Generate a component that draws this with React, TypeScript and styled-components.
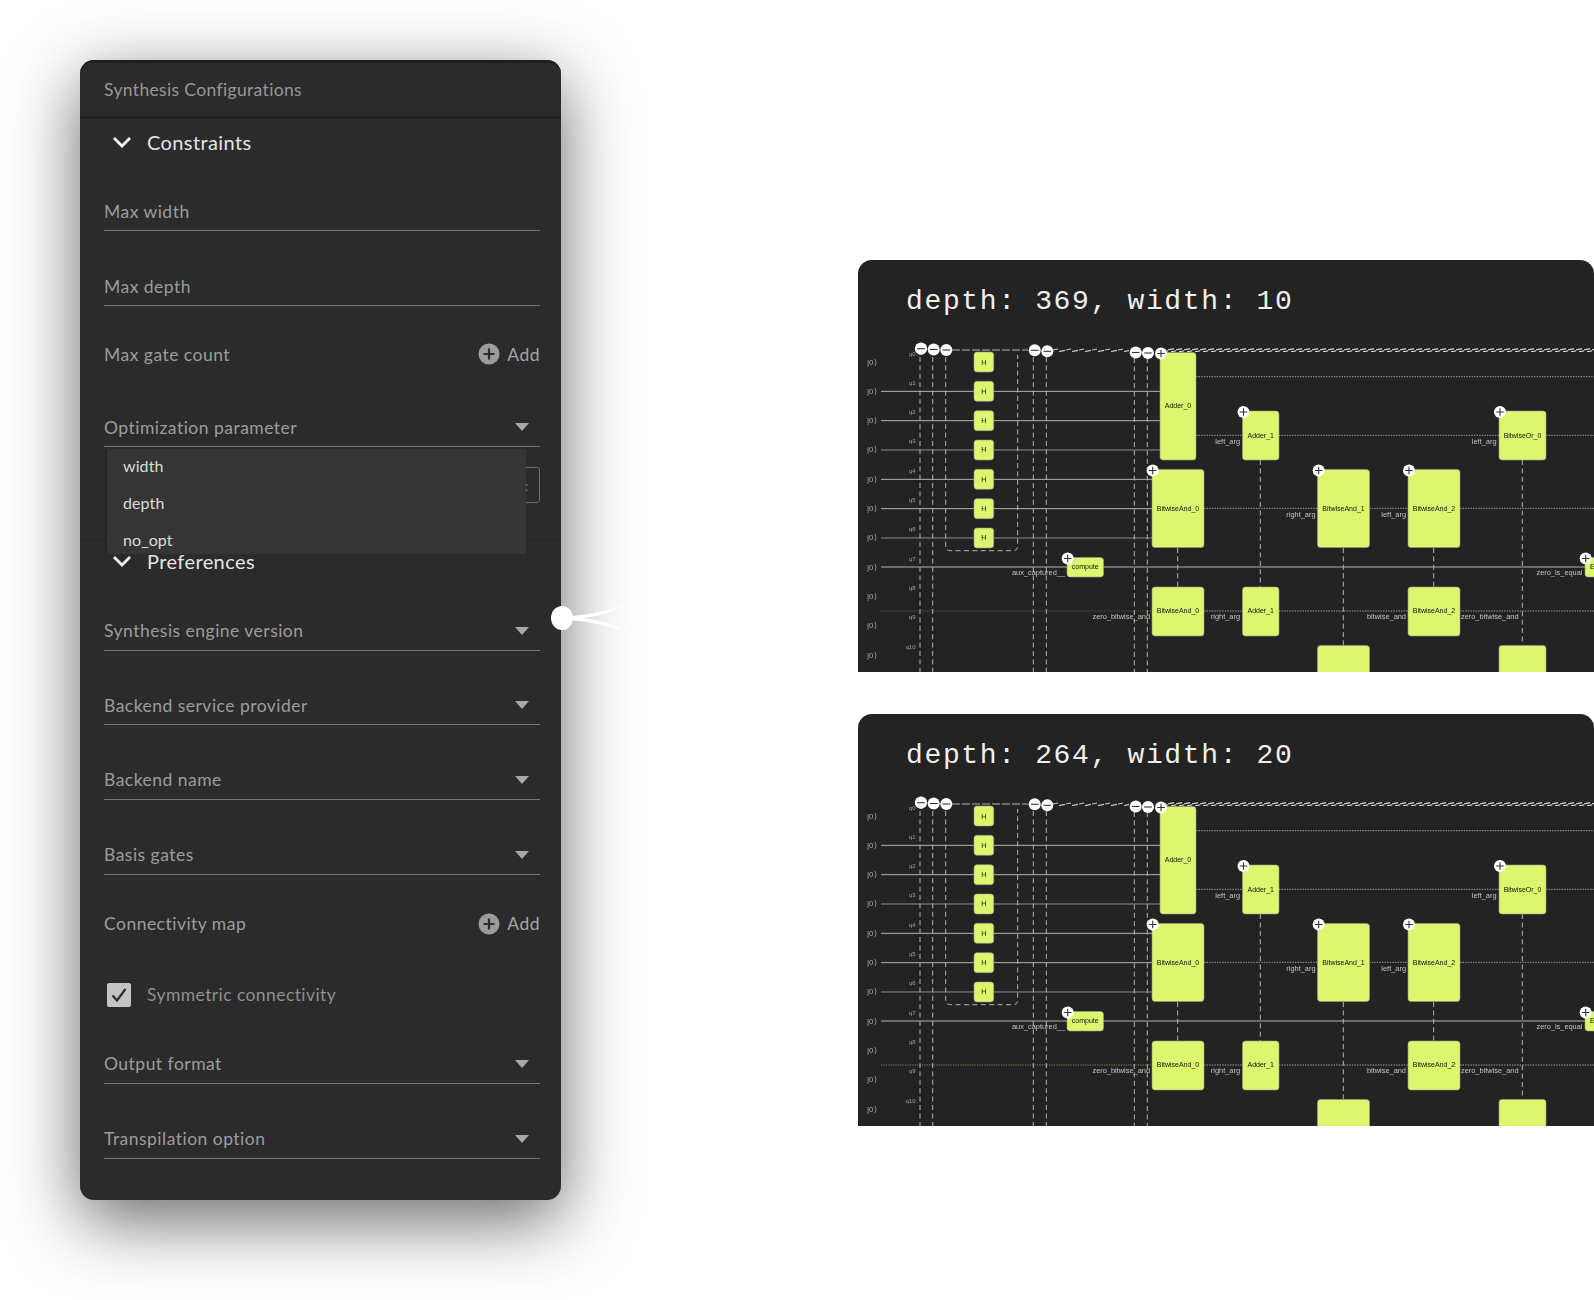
import React from 'react';
import styled, { createGlobalStyle } from 'styled-components';

const GlobalStyle = createGlobalStyle`
  html, body {
    margin: 0;
    padding: 0;
    background: #fff;
  }
  * {
    box-sizing: border-box;
  }
`;

/* page */
const Page = styled.div`
  position: relative;
  display: flex;
  width: 1594px;
  height: 1300px;
  overflow: hidden;
  background: #fff;
  font-family: 'Lato', 'Open Sans', sans-serif;
`;

/* config panel */
const ConfigPanel = styled.section`
  flex: none;
  position: relative;
  width: 481px;
  height: 1140px;
  margin: 60px 0 0 80px;
  background: #2b2b2b;
  border-radius: 14px;
  box-shadow: 0 20px 70px rgba(0, 0, 0, 0.6);
`;

const PanelHeader = styled.header`
  display: flex;
  align-items: center;
  height: 59px;
  padding-left: 24px;
  border-top: 3px solid #1f1f1f;
  border-bottom: 3px solid #1f1f1f;
  border-radius: 14px 14px 0 0;
  font-size: 17.5px;
  letter-spacing: 0.35px;
  color: #979797;
`;

const SectionHead = styled.div<{ $height: number }>`
  display: flex;
  align-items: center;
  gap: 15px;
  height: ${(p) => p.$height}px;
  padding: 0 0 2px 32px;
  font-size: 20px;
  letter-spacing: 0.4px;
  color: #e4e4e4;
`;

const Fields = styled.div`
  padding: 0 21px 0 24px;
`;

const Field = styled.div<{ $top: number }>`
  display: flex;
  align-items: center;
  justify-content: space-between;
  height: 38px;
  margin-top: ${(p) => p.$top}px;
  padding: 0 11px 1px 0;
  border-bottom: 1.5px solid #747474;
  font-size: 17.5px;
  letter-spacing: 0.48px;
  color: #9c9c9c;
`;

const AddRow = styled(Field)`
  padding: 0;
  border-bottom: 0;
`;

const AddButton = styled.span`
  display: flex;
  align-items: center;
  gap: 7px;
  color: #a5a5a5;
`;

const Caret = styled.span`
  width: 0;
  height: 0;
  border-left: 7px solid transparent;
  border-right: 7px solid transparent;
  border-top: 8px solid #a8a8a8;
`;

const GhostInput = styled.div`
  display: flex;
  align-items: center;
  justify-content: flex-end;
  height: 36px;
  margin: 20px 0 0 6px;
  padding-right: 11px;
  border: 1px solid #6e6e6e;
  border-radius: 3px;
  font-size: 14px;
  color: #888;
`;

const SectionRule = styled.div`
  height: 1px;
  margin-top: 36px;
  background: #252525;
`;

const CheckRow = styled.label<{ $top: number }>`
  display: flex;
  align-items: center;
  gap: 16px;
  height: 24px;
  margin-top: ${(p) => p.$top}px;
  padding-left: 3px;
  font-size: 17.5px;
  letter-spacing: 0.42px;
  color: #8f8f8f;
`;

const CheckBox = styled.span`
  display: flex;
  align-items: center;
  justify-content: center;
  width: 24px;
  height: 24px;
  border-radius: 2px;
  background: #c4c4c4;
`;

const Menu = styled.ul`
  position: absolute;
  left: 25px;
  top: 389px;
  width: 421px;
  height: 105px;
  margin: 0;
  padding: 0;
  overflow: hidden;
  list-style: none;
  background: #353535;
  border-left: 2px solid #232323;
`;

const MenuItem = styled.li`
  display: flex;
  align-items: center;
  height: 37px;
  padding: 0 0 4px 16px;
  font-size: 16px;
  letter-spacing: 0.1px;
  color: #dcdcdc;
`;

const Connector = styled.svg`
  position: absolute;
  left: 550px;
  top: 594px;
`;

/* result panels */
const Results = styled.div`
  flex: none;
  display: flex;
  flex-direction: column;
  gap: 42px;
  width: 736px;
  margin: 260px 0 0 297px;
`;

const ResultCard = styled.article`
  height: 412px;
  overflow: hidden;
  background: #232323;
  border-radius: 14px 14px 0 0;
`;

const ResultTitle = styled.h2`
  height: 70px;
  margin: 0;
  padding: 24px 0 0 48px;
  font-family: 'Liberation Mono', 'Courier New', monospace;
  font-size: 28px;
  font-weight: 400;
  line-height: 36px;
  letter-spacing: 1.65px;
  color: #efefef;
`;

const CircuitSvg = styled.svg`
  display: block;
  width: 736px;
  height: 342px;
  font-family: 'Liberation Sans', Arial, sans-serif;
  filter: blur(0.3px);
`;

const Chevron = () => (
  <svg width="20" height="12" viewBox="0 0 20 12" fill="none">
    <path d="M2 2 L10 10 L18 2" stroke="#f2f2f2" strokeWidth="2.8" />
  </svg>
);

const AddIcon = () => (
  <svg width="22" height="22" viewBox="0 0 22 22">
    <circle cx="11" cy="11" r="10.5" fill="#9b9b9b" />
    <path d="M11 5.5 V16.5 M5.5 11 H16.5" stroke="#2b2b2b" strokeWidth="2.2" />
  </svg>
);

const CheckMark = () => (
  <svg width="18" height="16" viewBox="0 0 18 16" fill="none">
    <path d="M2.5 8.5 L7 13.5 L15.5 2" stroke="#2b2b2b" strokeWidth="2.2" />
  </svg>
);

/* circuit data, in page coordinates of the first card */
const rowY = (i: number) => 362 + i * 29.33;
const GATE = '#dcf76e';
const LINE = '#b2b2b2';

const gates = [
  { x: 1160, y: 352.5, w: 36, h: 107.5, label: 'Adder_0', ly: 406 },
  { x: 1152, y: 469.5, w: 52, h: 78, label: 'BitwiseAnd_0', ly: 508.3 },
  { x: 1152, y: 587, w: 52, h: 49, label: 'BitwiseAnd_0', ly: 611 },
  { x: 1067, y: 557.5, w: 36.5, h: 19.5, label: 'compute', ly: 567 },
  { x: 1242.5, y: 411, w: 36.5, h: 49, label: 'Adder_1', ly: 435.3 },
  { x: 1242.5, y: 587, w: 36.5, h: 49, label: 'Adder_1', ly: 611 },
  { x: 1317.5, y: 469.5, w: 52, h: 78, label: 'BitwiseAnd_1', ly: 508.3 },
  { x: 1408, y: 469.5, w: 52, h: 78, label: 'BitwiseAnd_2', ly: 508.3 },
  { x: 1408, y: 587, w: 52, h: 49, label: 'BitwiseAnd_2', ly: 611 },
  { x: 1499, y: 411, w: 47, h: 49, label: 'BitwiseOr_0', ly: 435.3 },
  { x: 1317.5, y: 645.5, w: 52, h: 60, label: '', ly: 0 },
  { x: 1499, y: 645.5, w: 47, h: 60, label: '', ly: 0 },
  { x: 1585, y: 557.5, w: 30, h: 19.5, label: 'E', ly: 567 },
];

const wireLabels = [
  { x: 1065, y: 573, text: 'aux_captured__' },
  { x: 1150, y: 617, text: 'zero_bitwise_and' },
  { x: 1240, y: 441.5, text: 'left_arg' },
  { x: 1240, y: 617, text: 'right_arg' },
  { x: 1315.5, y: 514.7, text: 'right_arg' },
  { x: 1406, y: 514.7, text: 'left_arg' },
  { x: 1406, y: 617, text: 'bitwise_and' },
  { x: 1518.5, y: 617, text: 'zero_bitwise_and' },
  { x: 1496.5, y: 441.5, text: 'left_arg' },
  { x: 1582.5, y: 573, text: 'zero_is_equal' },
];

const dotted: [number, number, number][] = [
  [376.7, 1196, 1594],
  [435.3, 1196, 1242],
  [435.3, 1279, 1499],
  [435.3, 1546, 1594],
  [508.3, 1204, 1317],
  [508.3, 1369, 1408],
  [508.3, 1460, 1594],
  [611, 1204, 1242],
  [611, 1279, 1408],
  [611, 1460, 1594],
];

const scopeLines: [number, number, number][] = [
  [920, 357, 672],
  [932.7, 357, 672],
  [1033.3, 357, 672],
  [1046.3, 357, 672],
  [1134.3, 358, 672],
  [1147.3, 358, 672],
  [1177.7, 548, 587],
  [1260.3, 460, 587],
  [1343.3, 548, 645],
  [1433.7, 548, 587],
  [1522.3, 460, 645],
];

const minus = [
  [921, 348.7, 6.2],
  [933.7, 349.5, 6],
  [946.3, 350, 6],
  [1034.7, 350.3, 6],
  [1047.3, 351.3, 6],
  [1135.7, 352.5, 6],
  [1148, 353, 6],
];

const plus = [
  [1161, 353.5],
  [1152.7, 470.5],
  [1067.7, 558.5],
  [1243.5, 412],
  [1318.7, 470.5],
  [1409, 470.5],
  [1500, 412],
  [1585.7, 558.5],
];

type CircuitProps = { id: string; green: number };

const Circuit = ({ id, green }: CircuitProps) => (
  <CircuitSvg viewBox="858 330 736 342">
    <defs>
      <pattern id={`${id}-a`} width="13" height="4" patternUnits="userSpaceOnUse" y="348">
        <path d="M0 2 L5 1 M6 3.6 L12 2.4" stroke="#c8c8c8" strokeWidth="1.2" />
      </pattern>
      <pattern id={`${id}-b`} width="8" height="4" patternUnits="userSpaceOnUse" y="348">
        <path d="M0 1.8 L6 0.6 M3 3.8 L8 2.8" stroke="#d4d4d4" strokeWidth="1.2" />
      </pattern>
    </defs>

    <path d="M952 350 H1028" stroke="#b4b4b4" strokeWidth="1.1" strokeDasharray="8 2" />
    <rect x="1053" y="348" width="76" height="4" fill={`url(#${id}-a)`} />
    <rect x="1166" y="348" width="428" height="4" fill={`url(#${id}-b)`} />

    {Array.from({ length: 11 }, (_, i) => (
      <text key={i} x="867" y={rowY(i) + 2.5} fontSize="8" fill="#a8a8a8">
        |0⟩
      </text>
    ))}
    {Array.from({ length: 11 }, (_, i) => (
      <text key={i} x="915.5" y={rowY(i) - 6.5} fontSize="6" fill="#a0a0a0" textAnchor="end">
        q{i}
      </text>
    ))}

    {[1, 2, 3, 4, 5, 6].map((i) => (
      <path
        key={i}
        d={`M881 ${rowY(i)} H1160`}
        stroke={i === 3 || i === 6 ? '#8c8c8c' : LINE}
        strokeWidth="1"
      />
    ))}
    <path d={`M881 567 H1594`} stroke={LINE} strokeWidth="1" />
    <path
      d="M881 611 H1152"
      stroke="#5fa03c"
      strokeWidth="1"
      strokeDasharray="1.2 1.2"
      opacity={green}
    />
    {dotted.map(([y, a, b], i) => (
      <path
        key={i}
        d={`M${a} ${y} H${b}`}
        stroke="#b4b4b4"
        strokeWidth="0.9"
        strokeDasharray="1.4 1.2"
      />
    ))}

    {scopeLines.map(([x, a, b], i) => (
      <path
        key={i}
        d={`M${x} ${a} V${b}`}
        stroke="#b4b4b4"
        strokeWidth="1"
        strokeDasharray="5 3.4"
      />
    ))}
    <path
      d="M945.7 357 V546 Q945.7 550.7 950.5 550.7 H1013 Q1017.7 550.7 1017.7 546 V355"
      fill="none"
      stroke="#b4b4b4"
      strokeWidth="1"
      strokeDasharray="5 3.4"
    />

    {[0, 1, 2, 3, 4, 5, 6].map((i) => (
      <g key={i}>
        <rect
          x="974"
          y={rowY(i) - 10}
          width="19.7"
          height="20"
          rx="3"
          fill={GATE}
          stroke="#9a9a9a"
          strokeWidth="0.6"
        />
        <text x="983.8" y={rowY(i) + 2.5} fontSize="7" fill="#111" textAnchor="middle">
          H
        </text>
      </g>
    ))}

    {gates.map((g, i) => (
      <g key={i}>
        <rect
          x={g.x}
          y={g.y}
          width={g.w}
          height={g.h}
          rx="3"
          fill={GATE}
          stroke="#9a9a9a"
          strokeWidth="0.6"
        />
        {g.label && (
          <text
            x={g.label === 'E' ? 1590 : g.x + g.w / 2}
            y={g.ly + 2.4}
            fontSize="7"
            fill="#111"
            textAnchor={g.label === 'E' ? 'start' : 'middle'}
          >
            {g.label}
          </text>
        )}
      </g>
    ))}

    {wireLabels.map((l, i) => (
      <text key={i} x={l.x} y={l.y + 2.4} fontSize="7.4" fill="#c4c4c4" textAnchor="end">
        {l.text}
      </text>
    ))}

    {minus.map(([x, y, r], i) => (
      <g key={i}>
        <circle cx={x} cy={y} r={r} fill="#fff" />
        <path d={`M${x - 3.8} ${y} H${x + 3.8}`} stroke="#333" strokeWidth="1.1" />
      </g>
    ))}
    {plus.map(([x, y], i) => (
      <g key={i}>
        <circle cx={x} cy={y} r="6" fill="#fff" />
        <path
          d={`M${x - 3.8} ${y} H${x + 3.8} M${x} ${y - 3.8} V${y + 3.8}`}
          stroke="#333"
          strokeWidth="1.1"
        />
      </g>
    ))}
  </CircuitSvg>
);

const SelectField = ({ label, top }: { label: string; top: number }) => (
  <Field $top={top}>
    {label}
    <Caret />
  </Field>
);

const AddField = ({ label, top }: { label: string; top: number }) => (
  <AddRow $top={top}>
    {label}
    <AddButton>
      <AddIcon />
      Add
    </AddButton>
  </AddRow>
);

export default function App() {
  return (
    <Page>
      <GlobalStyle />
      <ConfigPanel>
        <PanelHeader>Synthesis Configurations</PanelHeader>
        <SectionHead $height={48}>
          <Chevron />
          Constraints
        </SectionHead>
        <Fields>
          <Field $top={26}>Max width</Field>
          <Field $top={37}>Max depth</Field>
          <AddField label="Max gate count" top={29} />
          <SelectField label="Optimization parameter" top={36} />
          <GhostInput>:</GhostInput>
        </Fields>
        <SectionRule />
        <SectionHead $height={44}>
          <Chevron />
          Preferences
        </SectionHead>
        <Fields>
          <SelectField label="Synthesis engine version" top={28.5} />
          <SelectField label="Backend service provider" top={36.5} />
          <SelectField label="Backend name" top={36.5} />
          <SelectField label="Basis gates" top={37} />
          <AddField label="Connectivity map" top={30} />
          <CheckRow $top={40}>
            <CheckBox>
              <CheckMark />
            </CheckBox>
            Symmetric connectivity
          </CheckRow>
          <SelectField label="Output format" top={39} />
          <SelectField label="Transpilation option" top={37} />
        </Fields>
        <Menu>
          <MenuItem>width</MenuItem>
          <MenuItem>depth</MenuItem>
          <MenuItem>no_opt</MenuItem>
        </Menu>
      </ConfigPanel>

      <Connector width="90" height="48" viewBox="0 0 90 48">
        <ellipse cx="12" cy="24" rx="11" ry="12" fill="#fff" />
        <path d="M20 22 Q46 21 82 8 Q56 22 34 24 Q56 26 82 39 Q46 28 20 26 Z" fill="#fff" />
      </Connector>

      <Results>
        <ResultCard>
          <ResultTitle>depth: 369, width: 10</ResultTitle>
          <Circuit id="first" green={0.55} />
        </ResultCard>
        <ResultCard>
          <ResultTitle>depth: 264, width: 20</ResultTitle>
          <Circuit id="second" green={1} />
        </ResultCard>
      </Results>
    </Page>
  );
}
